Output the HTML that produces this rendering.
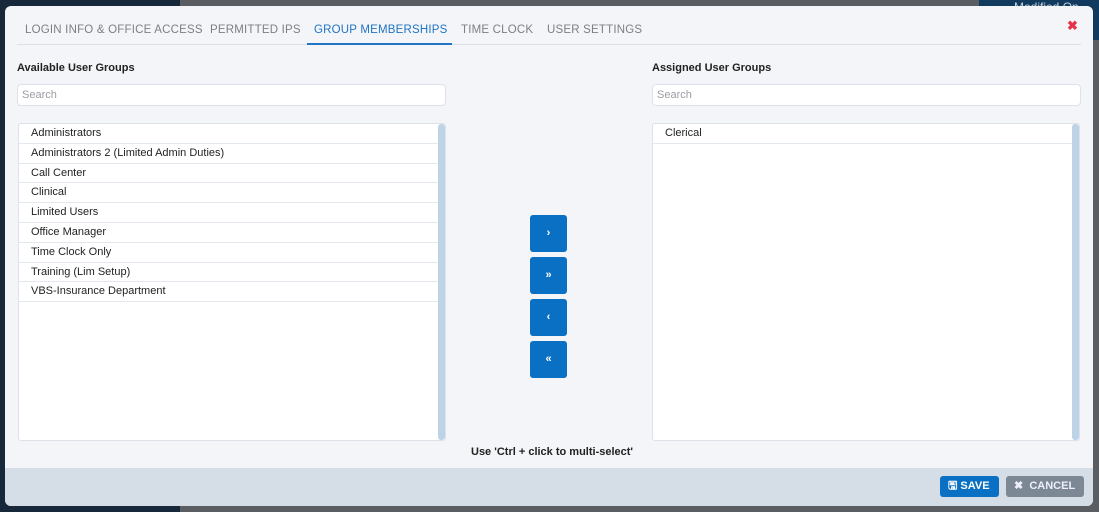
<!DOCTYPE html>
<html><head><style>
*{box-sizing:border-box;margin:0;padding:0}
body{width:1099px;height:512px;overflow:hidden;background:#5a5d62;font-family:"Liberation Sans",sans-serif;position:relative}
.bgl{position:absolute;left:0;top:0;width:180px;height:512px;background:#17283b}
.bgr{position:absolute;right:0;top:0;width:120px;height:40px;background:#123a5e;color:#c8d3de;font-size:12px;padding:0 0 0 35px}
.modal{position:absolute;left:5px;top:6px;width:1088px;height:500px;background:#f4f5f8;border-radius:6px;overflow:hidden}
.tabs{position:absolute;left:12px;top:0;width:1064px;height:39px;border-bottom:1px solid #dcdfe8}
.tab{position:absolute;top:18px;font-size:11.5px;color:#7d7f84;letter-spacing:.2px}
.tab.act{color:#1f74c4;}
.ul{position:absolute;left:290px;top:37px;width:145px;height:2px;background:#1f74c4}
.x{position:absolute;left:1062px;top:12px;color:#e8304a;font-size:13px;font-weight:bold}
.lbl{position:absolute;top:56px;font-size:11px;font-weight:bold;color:#222}
.search{position:absolute;top:78px;width:429px;height:22px;background:#fff;border:1px solid #dde1ea;border-radius:4px;font-size:11px;color:#9a9da3;padding:4px 0 0 4px}
.list{position:absolute;top:117px;width:428px;height:318px;background:#fff;border:1px solid #dde1ea;border-radius:3px;overflow:hidden}
.sb{position:absolute;right:0;top:0;width:7px;height:100%;background:#bcd4e6;border-radius:3px}
.row{height:19.8px;border-bottom:1px solid #e3e7ee;font-size:11px;color:#222;padding:3px 0 0 12px;margin-right:7px}
.btn{position:absolute;left:525px;width:37px;height:37px;background:#0a70c4;border-radius:3px;color:#fff;font-size:11px;font-weight:bold;text-align:center;line-height:37px}
.hint{position:absolute;left:466px;top:440px;font-size:11px;font-weight:bold;color:#222}
.foot{position:absolute;left:0;top:462px;width:1088px;height:38px;background:#d5dde7}
.save{position:absolute;left:935px;top:470px;width:59px;height:21px;background:#0a70c4;border-radius:3px;color:#fff;font-size:11px;font-weight:bold;line-height:21px;padding-left:8px}
.cancel{position:absolute;left:1001px;top:470px;width:78px;height:21px;background:#7c8893;border-radius:3px;color:#eef;font-size:11px;font-weight:bold;line-height:21px;padding-left:8px}
</style></head><body>
<div class="bgl"></div><div class="bgr">Modified On</div>
<div class="modal">
<div class="tabs">
<span class="tab" style="left:8px">LOGIN INFO &amp; OFFICE ACCESS</span>
<span class="tab" style="left:193px">PERMITTED IPS</span>
<span class="tab act" style="left:297px">GROUP MEMBERSHIPS</span>
<span class="tab" style="left:444px">TIME CLOCK</span>
<span class="tab" style="left:530px">USER SETTINGS</span>
<div class="ul"></div>
</div>
<div class="x">✖</div>
<div class="lbl" style="left:12px">Available User Groups</div>
<div class="lbl" style="left:647px">Assigned User Groups</div>
<div class="search" style="left:12px">Search</div>
<div class="search" style="left:647px">Search</div>
<div class="list" style="left:13px"><div class="sb"></div>
<div class="row">Administrators</div>
<div class="row">Administrators 2 (Limited Admin Duties)</div>
<div class="row">Call Center</div>
<div class="row">Clinical</div>
<div class="row">Limited Users</div>
<div class="row">Office Manager</div>
<div class="row">Time Clock Only</div>
<div class="row">Training (Lim Setup)</div>
<div class="row">VBS-Insurance Department</div>
</div>
<div class="list" style="left:647px"><div class="sb"></div>
<div class="row">Clerical</div>
</div>
<div class="btn" style="top:209px">›</div>
<div class="btn" style="top:251px">»</div>
<div class="btn" style="top:293px">‹</div>
<div class="btn" style="top:335px">«</div>
<div class="hint">Use 'Ctrl + click to multi-select'</div>
<div class="foot"></div>
<div class="save" style="left:935px">🖫 SAVE</div>
<div class="cancel">✖ &nbsp;CANCEL</div>
</div>
</body></html>
